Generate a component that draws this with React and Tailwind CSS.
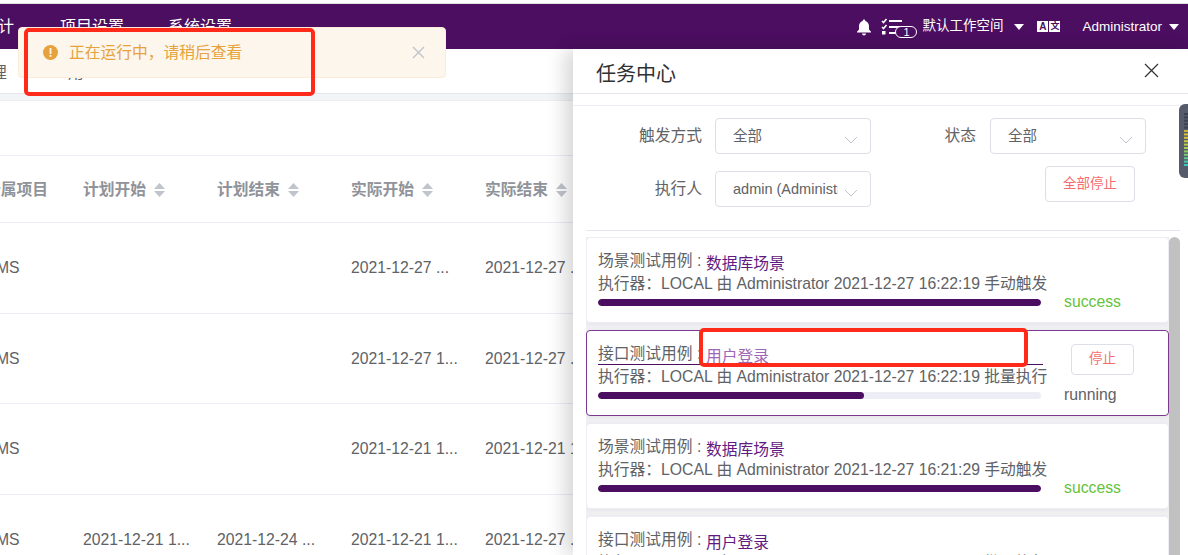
const FONT = "font-['Liberation_Sans','Noto_Sans_CJK_SC',sans-serif]";

function Caret() {
  return (
    <svg width="10" height="6" viewBox="0 0 10 6" className="shrink-0">
      <polygon points="0,0 10,0 5,6" fill="#fff" />
    </svg>
  );
}

function Sort() {
  return (
    <svg width="11" height="14" viewBox="0 0 11 14" className="ml-[8px] shrink-0">
      <polygon points="5.5,0 11,6 0,6" fill="#c0c4cc" />
      <polygon points="0,8 11,8 5.5,14" fill="#c0c4cc" />
    </svg>
  );
}

function Chevron() {
  return (
    <svg width="14" height="8" viewBox="0 0 14 8" className="absolute right-[12px] top-[17px]">
      <path d="M1 1 L7 7 L13 1" fill="none" stroke="#c0c4cc" strokeWidth="1" />
    </svg>
  );
}

function Select({ children }) {
  return (
    <div className="relative flex h-[36px] w-[156px] items-center rounded-[4px] border border-[#dcdfe6] pl-[17px] pt-[1px] text-[14.5px] text-[#606266]">
      <span className="w-[105px] overflow-hidden whitespace-nowrap">{children}</span>
      <Chevron />
    </div>
  );
}

function TopNav() {
  return (
    <div className="flex h-[45px] items-center justify-between bg-[#4b0e60] text-white">
      <div className="flex items-center text-[16px]">
        <span className="-ml-[2px] w-[62px]">计</span>
        <span className="w-[108px]">项目设置</span>
        <span>系统设置</span>
      </div>
      <div className="flex items-center text-[13.5px]">
        <svg width="16" height="17" viewBox="0 0 16 17" className="mr-[9px] mt-[2px]">
          <path d="M8 0.5a1.3 1.3 0 0 1 1.3 1.4C11.7 2.5 13 4.6 13 7v3.5l2 2.2v.8H1v-.8l2-2.2V7c0-2.4 1.3-4.5 3.7-5.1A1.3 1.3 0 0 1 8 .5z" fill="#fff" />
          <path d="M6 14.5h4a2 2 0 0 1-4 0z" fill="#fff" />
        </svg>
        <div className="relative mr-[20px] mt-[3px] h-[20px] w-[21px]">
          <svg width="21" height="18" viewBox="0 0 21 18" className="absolute left-0 top-0">
            <path d="M1 3l1.5 1.5L5.5 1" fill="none" stroke="#fff" strokeWidth="1.6" />
            <path d="M1 9l1.5 1.5L5.5 7" fill="none" stroke="#fff" strokeWidth="1.6" />
            <rect x="1" y="13" width="3.5" height="3.5" fill="#fff" />
            <rect x="8" y="2" width="13" height="2" fill="#fff" />
            <rect x="8" y="8" width="13" height="2" fill="#fff" />
            <rect x="8" y="14" width="8" height="2" fill="#fff" />
          </svg>
          <span className="absolute left-[14px] top-[8px] flex h-[12px] w-[22px] items-center justify-center rounded-full border border-white bg-[#4b0e60] text-[11px] leading-none">1</span>
        </div>
        <span className="mr-[11px]">默认工作空间</span>
        <Caret />
        <div className="ml-[13px] mr-[22px] flex gap-[1px]">
          <span className="flex h-[11px] w-[11px] items-center justify-center bg-white text-[10px] font-bold leading-none text-[#4b0e60]">A</span>
          <span className="flex h-[11px] w-[11px] items-center justify-center bg-white text-[9px] font-bold leading-none text-[#4b0e60]">文</span>
        </div>
        <span className="mr-[7px] mt-[1px]">Administrator</span>
        <span className="mr-[9px]"><Caret /></span>
      </div>
    </div>
  );
}

function Head({ children }) {
  return (
    <div className="flex items-center whitespace-nowrap pl-[11px] pt-[1px] text-[15.75px] font-bold text-[#909399]">
      {children}
      <Sort />
    </div>
  );
}

function Row({ cells, h }) {
  return (
    <div className={`grid grid-cols-[72px_134px_134px_134px_134px] items-center border-b border-[#ebeef5] text-[15.75px] text-[#606266] ${h}`}>
      <span className="-ml-[4px] whitespace-nowrap">MS</span>
      {cells.map((c, i) => (
        <span key={i} className="whitespace-nowrap pl-[11px]">{c}</span>
      ))}
    </div>
  );
}

function Table() {
  return (
    <div>
      <div className="grid h-[67px] grid-cols-[72px_134px_134px_134px_134px] items-center border-b border-[#ebeef5]">
        <span className="-ml-[15px] whitespace-nowrap pt-[1px] text-[15.75px] font-bold text-[#909399]">所属项目</span>
        <Head>计划开始</Head>
        <Head>计划结束</Head>
        <Head>实际开始</Head>
        <Head>实际结束</Head>
      </div>
      <Row h="h-[91px]" cells={["", "", "2021-12-27 ...", "2021-12-27 ..."]} />
      <Row h="h-[90px]" cells={["", "", "2021-12-27 1...", "2021-12-27 ..."]} />
      <Row h="h-[91px]" cells={["", "", "2021-12-21 1...", "2021-12-21 1..."]} />
      <Row h="h-[91px]" cells={["2021-12-21 1...", "2021-12-24 ...", "2021-12-21 1...", "2021-12-27 ..."]} />
    </div>
  );
}

function Card({ type, name, line, pct, status, active, faded }) {
  return (
    <div className={`flex h-[86px] shrink-0 rounded-[4px] border bg-white pl-[11px] text-[15.75px] text-[#606266] shadow-[0_1px_4px_rgba(0,0,0,0.05)] ${active ? "border-[#7b3a90]" : "border-[#ebeef5]"}`}>
      <div className="w-[454px] pt-[13px]">
        <div className={`flex h-[21px] w-[445px] whitespace-nowrap ${active ? "border-b border-[#4b0e60]" : ""}`}>
          <span className="w-[108px] leading-[20px]">{type} :</span>
          <span className={`mt-[3px] leading-[20px] ${faded ? "text-[#a066b8]" : "text-[#5f1b80]"}`}>{name}</span>
        </div>
        <div className="mt-[1px] h-[22px] whitespace-nowrap leading-[22px]">{line}</div>
        <div className="mt-[4px] h-[7px] w-[443px] overflow-hidden rounded-full bg-[#ebeef5]">
          <div className="h-full rounded-full bg-[#4b0e60]" style={{ width: `${pct}%` }} />
        </div>
      </div>
      <div className="flex flex-1 flex-col justify-end pb-[9px] pl-[12px]">
        {active && (
          <div className="mb-[9px] ml-[7px] flex h-[31px] w-[63px] items-center justify-center rounded-[4px] border border-[#dcdfe6] text-[13.5px] text-[#f56c6c]">停止</div>
        )}
        <span className={`leading-[22px] ${status === "success" ? "text-[#67c23a]" : "text-[#606266]"}`}>{status}</span>
      </div>
    </div>
  );
}

function Drawer() {
  return (
    <div className="absolute bottom-0 right-0 top-[49px] flex w-[615px] flex-col overflow-hidden bg-white shadow-[-8px_0_18px_rgba(0,0,0,0.16)]">
      <div className="flex h-[45px] shrink-0 items-center justify-between border-b border-[#e4e7ed] pl-[23px] pr-[29px] pt-[5px]">
        <span className="text-[20px] text-[#303133]">任务中心</span>
        <svg width="15" height="15" viewBox="0 0 15 15" className="mb-[7px]">
          <path d="M1 1 L14 14 M14 1 L1 14" stroke="#303133" strokeWidth="1.2" fill="none" />
        </svg>
      </div>
      <div className="mt-[11px] w-[606px] shrink-0 border-t border-[#ebeef5] pt-[12px] text-[15.75px] text-[#606266]">
        <div className="flex items-center">
          <span className="w-[129px] text-right">触发方式</span>
          <div className="ml-[13px]"><Select>全部</Select></div>
          <span className="w-[105px] text-right">状态</span>
          <div className="ml-[14px]"><Select>全部</Select></div>
        </div>
        <div className="mt-[17px] flex h-[36px] items-center">
          <span className="w-[129px] text-right">执行人</span>
          <div className="ml-[13px]"><Select>admin (Administrator)</Select></div>
          <div className="ml-[174px] -mt-[10px] flex h-[36px] w-[90px] items-center justify-center rounded-[4px] border border-[#dcdfe6] text-[13.5px] text-[#f56c6c]">全部停止</div>
        </div>
      </div>
      <div className="ml-[13px] mt-[23px] w-[594px] shrink-0 border-t border-[#e4e7ed]" />
      <div className="ml-[13px] mt-[6px] flex min-h-0 flex-1 w-[594px]">
        <div className="flex w-[583px] flex-col gap-[7px] overflow-hidden bg-[#f0f0f2]">
          <Card type="场景测试用例" name="数据库场景" line="执行器：LOCAL 由 Administrator 2021-12-27 16:22:19 手动触发" pct={100} status="success" />
          <Card type="接口测试用例" name="用户登录" line="执行器：LOCAL 由 Administrator 2021-12-27 16:22:19 批量执行" pct={60} status="running" active faded />
          <Card type="场景测试用例" name="数据库场景" line="执行器：LOCAL 由 Administrator 2021-12-27 16:21:29 手动触发" pct={100} status="success" />
          <Card type="接口测试用例" name="用户登录" line="执行器：LOCAL 由 Administrator 2021-12-27 16:21:29 批量执行" pct={100} status="success" />
        </div>
        <div className="h-[330px] w-[11px] rounded-t-full bg-[#c1c1c1]" />
      </div>
    </div>
  );
}

function Widget() {
  const colors = ["#3b4252","#3b4252","#3b4252","#3b4252","#3b4252","#c9b23c","#d6c13f","#d6c13f","#c8c845","#b8cc4a","#a4cc55","#8ccb62","#74c97a","#5cc892","#4ac8a8","#3cc8b8"];
  return (
    <div className="absolute left-[1179px] top-[104px] h-[74px] w-[9px] rounded-l-[6px] bg-[#565b6b]">
      <svg width="9" height="74" viewBox="0 0 9 74">
        {colors.map((c, i) => (
          <rect key={i} x="5" y={9 + i * 3.4} width="4" height="2" fill={c} />
        ))}
      </svg>
    </div>
  );
}

export default function App() {
  return (
    <div className={`relative h-[555px] w-[1188px] overflow-hidden bg-white ${FONT}`}>
      <div className="h-[4px] border-b border-[#dfdfe3] bg-white" />
      <TopNav />
      <div className="flex h-[45px] items-center border-b border-[#e4e7ed] pt-[4px] text-[15.75px] text-[#606266]">
        <span className="-ml-[9px] w-[77px] whitespace-nowrap">理</span>
        <span>用</span>
      </div>
      <div className="h-[6px] bg-[#f3f4f8]" />
      <div className="h-[56px] border-b border-[#ebeef5] border-t border-t-[#eeeeee]" />
      <Table />

      <Drawer />
      <Widget />

      <div className="absolute left-[18px] top-[27px] flex h-[51px] w-[428px] items-center rounded-[4px] border border-[#faecd8] bg-[#fdf6ec] pl-[24px] pr-[20px] text-[15.75px] text-[#e6a23c]">
        <svg width="15" height="15" viewBox="0 0 15 15" className="shrink-0">
          <circle cx="7.5" cy="7.5" r="7.5" fill="#e6a23c" />
          <rect x="6.6" y="3" width="1.8" height="6" fill="#fdf6ec" />
          <rect x="6.6" y="10" width="1.8" height="1.8" fill="#fdf6ec" />
        </svg>
        <span className="ml-[11px] flex-1 whitespace-nowrap">正在运行中，请稍后查看</span>
        <svg width="13" height="13" viewBox="0 0 13 13">
          <path d="M1 1 L12 12 M12 1 L1 12" stroke="#c0c4cc" strokeWidth="1.4" fill="none" />
        </svg>
      </div>

      <div className="absolute left-[24px] top-[28px] h-[68px] w-[291px] rounded-[5px] border-[4px] border-[#ff2a1a]" />
      <div className="absolute left-[699px] top-[328px] h-[39px] w-[329px] rounded-[5px] border-[4px] border-[#ff2a1a]" />
    </div>
  );
}
